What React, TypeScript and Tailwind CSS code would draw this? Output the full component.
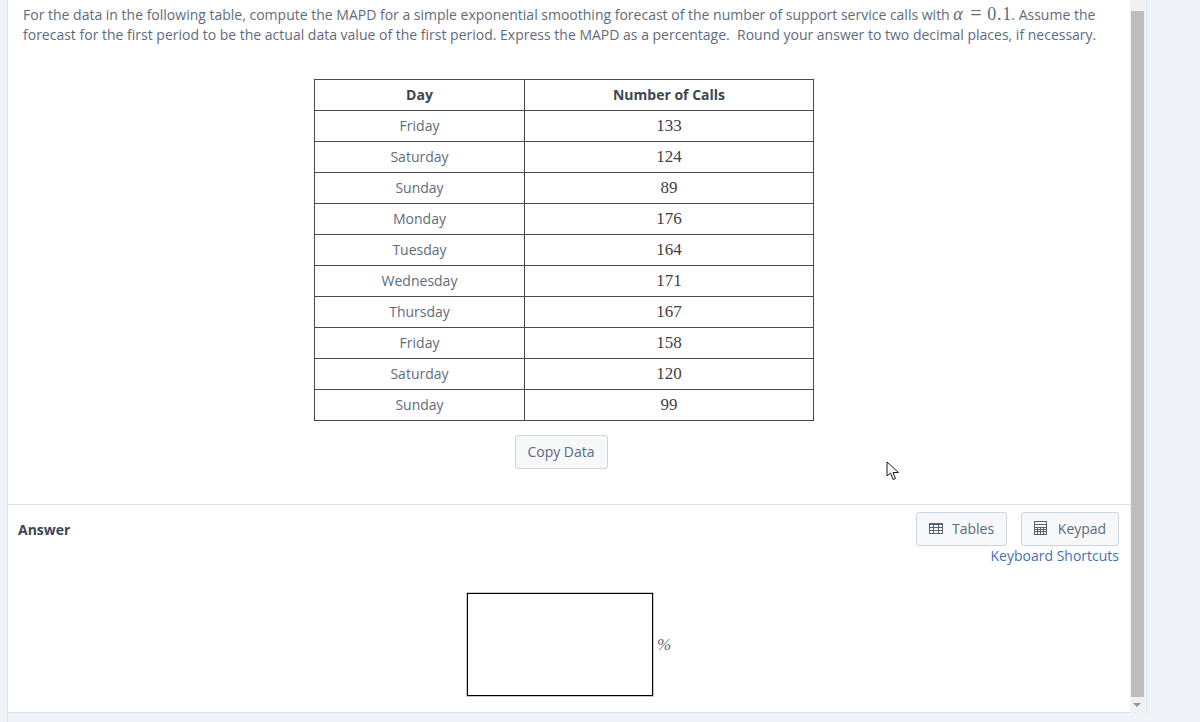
import React from 'react';

const ROWS: [string, string][] = [
  ['Friday', '133'],
  ['Saturday', '124'],
  ['Sunday', '89'],
  ['Monday', '176'],
  ['Tuesday', '164'],
  ['Wednesday', '171'],
  ['Thursday', '167'],
  ['Friday', '158'],
  ['Saturday', '120'],
  ['Sunday', '99'],
];

const SERIF = "font-['Liberation_Serif',serif]";

function TablesIcon() {
  return (
    <svg width="14" height="11" viewBox="0 0 14 11" fill="none" stroke="#5a6270" strokeWidth="1" shapeRendering="crispEdges">
      <rect x="0.5" y="0.5" width="13" height="10" />
      <path d="M0.5 1.5H13.5M0.5 4.5H13.5M0.5 7.5H13.5M4.5 1.5V10.5M9.5 1.5V10.5" />
    </svg>
  );
}

function KeypadIcon() {
  return (
    <svg width="13" height="14" viewBox="0 0 13 14" fill="none" stroke="#5a6270" strokeWidth="1" shapeRendering="crispEdges">
      <rect x="0.5" y="0.5" width="12" height="13" />
      <path d="M0.5 3.5H12.5M0.5 6.5H12.5M0.5 8.5H12.5M0.5 10.5H12.5M3.5 6.5V13.5M6.5 6.5V13.5M9.5 6.5V13.5" />
    </svg>
  );
}

export default function App() {
  return (
    <div className="relative flex h-[722px] w-[1200px] overflow-hidden bg-[#f0f4f8] font-['Open_Sans',sans-serif] text-[14px] text-[#5f6b7a]">
      <div className="w-[8px] shrink-0 border-r border-[#e4e7ea]" />

      <main className="h-[713px] w-[1122px] shrink-0 border-b border-[#dfe3e6] bg-white">
        <p className="h-[79px] pl-[15px] pr-[20px] pt-[3px] text-[14px] leading-[20px]">
          For the data in the following table, compute the MAPD for a simple exponential smoothing forecast of the number of support service calls with{' '}
          <span className={`${SERIF} inline-block w-[10px] text-[18px] leading-[20px] italic`}>α</span>
          <span className={`${SERIF} ml-[6px] inline-block w-[13px] text-center text-[20px] leading-[20px]`}>=</span>
          <span className={`${SERIF} ml-[5px] inline-block w-[24px] text-[18px] leading-[20px] tracking-[0.7px]`}>0.1</span>. Assume the forecast for the first period to be the actual data value of the first period. Express the MAPD as a percentage.&nbsp; Round your answer to two decimal places, if necessary.
        </p>

        <table className="ml-[306px] w-[500px] table-fixed border-collapse border border-[#4a4a4a] text-center">
          <colgroup>
            <col className="w-[210px]" />
            <col />
          </colgroup>
          <thead>
            <tr className="h-[31px]">
              <th className="border border-[#4a4a4a] pb-[2px] font-bold text-[#3d4652]">Day</th>
              <th className="border border-[#4a4a4a] pb-[2px] font-bold text-[#3d4652]">Number of Calls</th>
            </tr>
          </thead>
          <tbody>
            {ROWS.map(([day, calls], i) => (
              <tr key={i} className="h-[31px]">
                <td className="border border-[#4a4a4a] pb-[2px]">{day}</td>
                <td className={`border border-[#4a4a4a] ${SERIF} text-[17px] leading-[20px] text-[#3f3f3f]`}>{calls}</td>
              </tr>
            ))}
          </tbody>
        </table>

        <div className="mt-[14px] flex justify-center pr-[16px]">
          <button className="h-[34px] w-[93px] rounded-[3px] border border-[#c9d6df] bg-[#f6f8fa] pb-[2px]">Copy Data</button>
        </div>

        <section className="mt-[35px] border-t border-[#dfe3e6] pl-[10px] pr-[11px] pt-[7px]">
          <div className="flex items-start justify-between">
            <h2 className="mt-[8px] text-[14px] font-bold leading-[20px] text-[#3d4652]">Answer</h2>
            <div className="flex flex-col items-end">
              <div className="flex gap-[14px]">
                <button className="flex h-[34px] w-[91px] items-center justify-center gap-[9px] rounded-[3px] border border-[#c9d6df] bg-[#f6f8fa] pb-[2px]">
                  <TablesIcon />
                  Tables
                </button>
                <button className="flex h-[34px] w-[98px] items-center justify-center gap-[11px] rounded-[3px] border border-[#c9d6df] bg-[#f6f8fa] pb-[2px]">
                  <KeypadIcon />
                  Keypad
                </button>
              </div>
              <a className="leading-[20px] text-[#3f72b5]">Keyboard Shortcuts</a>
            </div>
          </div>

          <div className="mt-[27px] flex items-center pl-[449px]">
            <div className="h-[103px] w-[186px] border border-black outline outline-1 outline-[#c8c8c8]" />
            <span className={`ml-[4px] ${SERIF} text-[17px] italic`}>%</span>
          </div>
        </section>
      </main>

      <div className="flex h-[713px] w-[17px] shrink-0 flex-col border-r border-[#e4e7ea] bg-[#f1f1f1] pl-[1px]">
        <div className="mt-[11px] h-[686px] w-[13px] bg-[#bdbdbd]" />
        <svg width="8" height="4" viewBox="0 0 8 4" className="ml-[2px] mt-[6px]">
          <path d="M0 0H8L4 4Z" fill="#969696" />
        </svg>
      </div>

      <svg width="14" height="20" viewBox="0 0 14 20" className="absolute left-[886px] top-[461px]">
        <path d="M1 1V15L4.5 12L7 18.5L9.5 17.5L7 11.5H12.5Z" fill="#fff" stroke="#1a1a1a" strokeWidth="1" strokeLinejoin="round" />
      </svg>
    </div>
  );
}
